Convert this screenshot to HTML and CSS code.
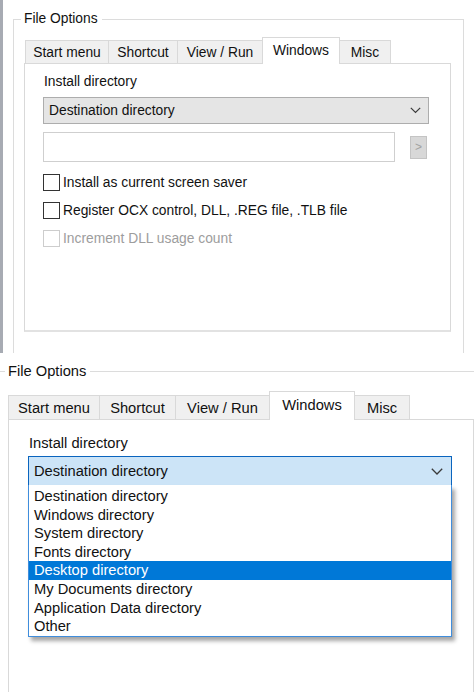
FILE: index.html
```html
<!DOCTYPE html>
<html lang="en">
<head>
<meta charset="utf-8">
<title>File Options</title>
<link rel="stylesheet" href="styles.css">
</head>
<body>
<section class="shot shot-top">
  <div class="edge"></div>
  <fieldset class="group">
    <legend>File Options</legend>
    <div class="tabs">
      <div class="tab t-start">Start menu</div>
      <div class="tab t-short">Shortcut</div>
      <div class="tab t-view">View / Run</div>
      <div class="tab t-win sel">Windows</div>
      <div class="tab t-misc">Misc</div>
    </div>
    <div class="panel">
      <div class="label">Install directory</div>
      <div class="select">
        <span>Destination directory</span>
        <svg class="chev" width="11" height="7" viewBox="0 0 11 7"><polyline points="0.8,0.8 5.5,5.5 10.2,0.8" fill="none" stroke="#3a3a3a" stroke-width="1.2"/></svg>
      </div>
      <div class="pathrow">
        <div class="input"></div>
        <div class="browse">&gt;</div>
      </div>
      <div class="check"><span class="box"></span><span>Install as current screen saver</span></div>
      <div class="check"><span class="box"></span><span>Register OCX control, DLL, .REG file, .TLB file</span></div>
      <div class="check disabled"><span class="box"></span><span>Increment DLL usage count</span></div>
    </div>
  </fieldset>
</section>
<section class="shot shot-bottom">
  <fieldset class="group">
    <legend>File Options</legend>
    <div class="tabs">
      <div class="tab t-start">Start menu</div>
      <div class="tab t-short">Shortcut</div>
      <div class="tab t-view">View / Run</div>
      <div class="tab t-win sel">Windows</div>
      <div class="tab t-misc">Misc</div>
    </div>
    <div class="panel">
      <div class="label">Install directory</div>
      <div class="select open">
        <span>Destination directory</span>
        <svg class="chev" width="12" height="7" viewBox="0 0 12 7"><polyline points="0.8,0.8 6,6 11.2,0.8" fill="none" stroke="#3a3a3a" stroke-width="1.3"/></svg>
        <ul class="list">
          <li>Destination directory</li>
          <li>Windows directory</li>
          <li>System directory</li>
          <li>Fonts directory</li>
          <li class="hl">Desktop directory</li>
          <li>My Documents directory</li>
          <li>Application Data directory</li>
          <li>Other</li>
        </ul>
      </div>
    </div>
  </fieldset>
</section>
</body>
</html>
```
FILE: styles.css
```css
* { box-sizing: border-box; }
html, body { margin: 0; padding: 0; background: #fff; }
body {
  width: 474px;
  height: 692px;
  overflow: hidden;
  font-family: "Liberation Sans", Arial, sans-serif;
  color: #111;
}
.shot { overflow: hidden; position: relative; }

/* ---------- top screenshot ---------- */
.shot-top { height: 353px; display: flex; font-size: 13.8px; }
.edge { width: 3px; flex: none; background: #a7abb3; }
.group {
  flex: none;
  min-width: 0;
  margin: 0;
  border: 1px solid #dcdcdc;
}
.group legend { padding: 0 4px 0 3px; margin-left: -3px; }
.shot-top .group {
  margin: 10px 0 0 10px;
  padding: 9px 0 0 10px;
  width: 451px;
  height: 420px;
}
.shot-top .group legend { line-height: 18px; }

.tabs { display: flex; align-items: flex-end; }
.tab {
  border: 1px solid #d9d9d9;
  border-bottom: none;
  background: #f0f0f0;
  margin-left: -1px;
  display: flex;
  align-items: center;
  justify-content: center;
  white-space: nowrap;
}
.tab.sel { background: #fff; position: relative; z-index: 1; }
.panel { border: 1px solid #d9d9d9; background: #fff; }

.shot-top .tabs { height: 26px; }
.shot-top .tab { height: 23px; }
.shot-top .tab.sel { height: 27px; margin-bottom: -1px; padding-bottom: 2px; }
.shot-top .tab:first-child { margin-left: 1px; }
.shot-top .t-start { width: 84px; }
.shot-top .t-short { width: 70px; }
.shot-top .t-view { width: 86px; }
.shot-top .t-win { width: 78px; }
.shot-top .t-misc { width: 52px; }

.shot-top .panel {
  width: 427px;
  height: 269px;
  padding: 10px 0 0 18px;
  border-bottom: 2px solid #e2e2e2;
}
.shot-top .label { line-height: 16px; padding-left: 1px; }
.select {
  display: flex;
  align-items: center;
  justify-content: space-between;
  border: 1px solid #adadad;
  background: #e5e5e5;
  position: relative;
}
.shot-top .select {
  margin-top: 7px;
  width: 386px;
  height: 27px;
  padding: 0 7px 0 5px;
}
.pathrow { display: flex; align-items: center; margin-top: 8px; height: 30px; }
.input { width: 352px; height: 30px; border: 1px solid #cfcfcf; background: #fff; }
.browse {
  margin-left: 15px;
  width: 17px;
  height: 23px;
  border: 1px solid #c4c4c4;
  background: #d8d8d8;
  color: #a2a2a2;
  font-size: 12px;
  display: flex;
  align-items: center;
  justify-content: center;
}
.check { display: flex; align-items: center; gap: 3px; height: 28px; }
.pathrow + .check { margin-top: 6px; }
.box { width: 17px; height: 17px; border: 1px solid #333; background: #fff; flex: none; }
.check.disabled { color: #9d9d9d; }
.check.disabled .box { border-color: #cdcdcd; }

/* ---------- bottom screenshot ---------- */
.shot-bottom { height: 339px; font-size: 14.7px; }
.shot-bottom .group {
  margin: 8px 0 0 -3px;
  padding: 10px 0 0 10px;
  width: 490px;
  height: 400px;
}
.shot-bottom .group legend { line-height: 20px; }
.shot-bottom .tabs { height: 28px; }
.shot-bottom .tab { height: 24px; }
.shot-bottom .tab.sel { height: 29px; margin-bottom: -1px; padding-bottom: 3px; }
.shot-bottom .tab:first-child { margin-left: 0; }
.shot-bottom .t-start { width: 92px; }
.shot-bottom .t-short { width: 77px; }
.shot-bottom .t-view { width: 95px; }
.shot-bottom .t-win { width: 86px; }
.shot-bottom .t-misc { width: 56px; }

.shot-bottom .panel {
  width: 466px;
  height: 300px;
  padding: 14px 0 0 19px;
}
.shot-bottom .label { line-height: 18px; padding-left: 1px; }
.shot-bottom .select {
  margin-top: 4px;
  width: 424px;
  height: 30px;
  padding: 0 8px 0 5px;
}
.select.open { background: #cce4f7; border-color: #0a64be; }
.list {
  position: absolute;
  top: 100%;
  left: -1px;
  right: -1px;
  margin: 0;
  padding: 2px 0 0;
  list-style: none;
  background: #fff;
  border: 1px solid #3f8ddc;
  border-top: none;
  box-shadow: 3px 4px 4px rgba(0, 0, 0, 0.35);
}
.list li { height: 18.6px; line-height: 18.6px; padding-left: 5px; white-space: nowrap; }
.list li.hl { background: #0078d7; color: #fff; }
```
